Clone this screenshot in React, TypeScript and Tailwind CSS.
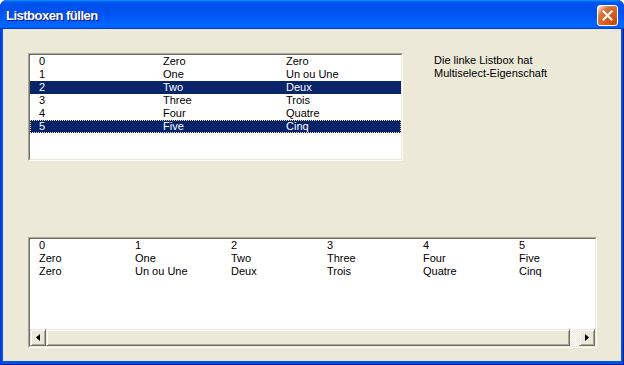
import React from 'react';

const rows1 = [
  ['0', 'Zero', 'Zero'],
  ['1', 'One', 'Un ou Une'],
  ['2', 'Two', 'Deux'],
  ['3', 'Three', 'Trois'],
  ['4', 'Four', 'Quatre'],
  ['5', 'Five', 'Cinq'],
];

const selected = [2, 5];

// sunken 3D border of a classic listbox
function Sunken({ className, children }: { className: string; children: React.ReactNode }) {
  return (
    <div className={`border border-t-[#aca899] border-l-[#aca899] border-r-white border-b-white ${className}`}>
      <div className="w-full h-full border border-t-[#716f64] border-l-[#716f64] border-r-[#ece9d8] border-b-[#ece9d8] bg-white flex flex-col overflow-hidden">
        {children}
      </div>
    </div>
  );
}

function ScrollButton({ dir }: { dir: 'left' | 'right' }) {
  return (
    <div className="w-[16px] shrink-0 h-full flex items-center justify-center bg-[#ece9d8] border border-t-[#ece9d8] border-l-[#ece9d8] border-r-[#716f64] border-b-[#716f64] shadow-[inset_1px_1px_#fff,inset_-1px_-1px_#aca899]">
      <svg width="4" height="7" viewBox="0 0 4 7">
        {dir === 'left' ? <path d="M4 0 L0 3.5 L4 7 Z" fill="#000" /> : <path d="M0 0 L4 3.5 L0 7 Z" fill="#000" />}
      </svg>
    </div>
  );
}

export default function App() {
  return (
    <div className="w-[624px] h-[365px] flex flex-col rounded-t-[7px] bg-[#0054e3] overflow-hidden font-['Liberation_Sans',Arial,sans-serif] shadow-[inset_1px_0_#0831d9,inset_-1px_0_#00138c,inset_0_-1px_#00138c]">
      {/* Title bar */}
      <div className="h-[29px] shrink-0 flex items-center pl-[6px] pr-[6px] bg-[linear-gradient(180deg,#0997ff,#0053ee_8%,#0050ee_40%,#06f_88%,#06f_93%,#005bff_95%,#003dd7_96%,#003dd7)]">
        <span className="text-white font-bold text-[13px] tracking-[-0.5px] pt-[3px] [text-shadow:1px_1px_#0f1089]">
          Listboxen füllen
        </span>
        <div className="ml-auto mt-[2px] w-[21px] h-[21px] rounded-[3px] border border-white flex items-center justify-center bg-[radial-gradient(circle_at_90%_90%,#cc4600_0%,#dc6527_55%,#cd7546_70%,#ffccb2_90%,#fff_100%)]">
          <svg width="11" height="11" viewBox="0 0 11 11">
            <path d="M1.5 1.5 L9.5 9.5 M9.5 1.5 L1.5 9.5" stroke="#fff" strokeWidth="2" strokeLinecap="square" />
          </svg>
        </div>
      </div>

      {/* Client area */}
      <div className="flex-1 mx-[3px] mb-[4px] bg-[#ece9d8] pl-[25px] pt-[24px] text-[11px] text-black">
        <div className="flex">
          <Sunken className="w-[375px] h-[108px]">
            {rows1.map((r, i) => {
              const sel = selected.includes(i);
              return (
                <div
                  key={i}
                  className={`flex shrink-0 h-[13px] leading-[13px] pl-[9px] ${sel ? 'bg-[#0a246a] text-white' : ''} ${i === 5 ? 'outline outline-1 outline-dotted outline-[#f5db95] -outline-offset-1' : ''}`}
                >
                  <span className="w-[124px] shrink-0">{r[0]}</span>
                  <span className="w-[123px] shrink-0">{r[1]}</span>
                  <span>{r[2]}</span>
                </div>
              );
            })}
          </Sunken>
          <div className="ml-[31px] mt-[1px] leading-[13px]">
            <div>Die linke Listbox hat</div>
            <div>Multiselect-Eigenschaft</div>
          </div>
        </div>

        <Sunken className="mt-[76px] w-[569px] h-[111px]">
          <div className="flex-1 flex pl-[9px] overflow-hidden">
            {rows1.map((r, i) => (
              <div key={i} className="w-[96px] shrink-0 leading-[13px]">
                <div>{r[0]}</div>
                <div>{r[1]}</div>
                <div>{r[2]}</div>
              </div>
            ))}
          </div>
          <div className="h-[17px] shrink-0 flex bg-[#ece9d8]">
            <ScrollButton dir="left" />
            <div className="w-[524px] shrink-0 h-full bg-[#ece9d8] border border-t-[#ece9d8] border-l-[#ece9d8] border-r-[#716f64] border-b-[#716f64] shadow-[inset_1px_1px_#fff,inset_-1px_-1px_#aca899]" />
            <div className="flex-1 bg-[repeating-conic-gradient(#fff_0_25%,#ece9d8_0_50%)] bg-[length:2px_2px]" />
            <ScrollButton dir="right" />
          </div>
        </Sunken>
      </div>
    </div>
  );
}
